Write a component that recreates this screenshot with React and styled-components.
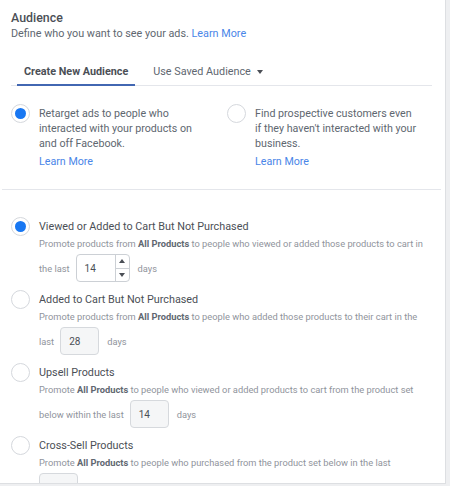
import React from 'react';
import styled, { createGlobalStyle } from 'styled-components';

const GlobalStyle = createGlobalStyle`
  html, body {
    margin: 0;
    padding: 0;
    background: #eeeff1;
  }
  body {
    font-family: Roboto, 'Liberation Sans', Arial, sans-serif;
    -webkit-font-smoothing: antialiased;
  }
`;

const Card = styled.section`
  width: 445px;
  height: 483px;
  background: #fff;
  border-right: 1px solid #dddfe2;
  border-bottom: 1px solid #dddfe2;
  overflow: hidden;
  box-sizing: content-box;
`;

const Header = styled.header`
  padding: 10px 11px 0;
`;

const Title = styled.h2`
  margin: 0;
  font-size: 12.4px;
  line-height: 16px;
  font-weight: 500;
  color: #4b4f56;
`;

const Subtitle = styled.p`
  margin: 0;
  font-size: 10.8px;
  line-height: 16px;
  color: #606770;
`;

const Link = styled.a`
  color: #4a86e8;
  text-decoration: none;
  cursor: pointer;
`;

const Tabs = styled.nav`
  display: flex;
  margin: 16px 13px 0 11px;
  border-bottom: 1px solid #e4e6eb;
`;

const Tab = styled.button`
  display: flex;
  align-items: center;
  gap: 6px;
  border: none;
  background: none;
  padding: 0 7px;
  margin: 0 ${(p) => (p.$active ? '11px' : '0')} -1px ${(p) => (p.$active ? '6px' : '0')};
  height: 28px;
  font-family: inherit;
  font-size: 10.8px;
  font-weight: ${(p) => (p.$active ? 700 : 400)};
  color: ${(p) => (p.$active ? '#4b4f56' : '#606770')};
  border-bottom: 2px solid ${(p) => (p.$active ? '#4267b2' : 'transparent')};
  cursor: pointer;
`;

const Caret = styled.span`
  width: 0;
  height: 0;
  border-left: 3.5px solid transparent;
  border-right: 3.5px solid transparent;
  border-top: 4px solid #4b4f56;
  margin-top: 1px;
`;

const Choices = styled.div`
  display: grid;
  grid-template-columns: 216px 1fr;
  padding: 19px 11px 0;
`;

const Choice = styled.label`
  display: grid;
  grid-template-columns: 28px 1fr;
  align-items: start;
  cursor: pointer;
`;

const Radio = styled.span`
  position: relative;
  width: 19px;
  height: 19px;
  box-sizing: border-box;
  border-radius: 50%;
  border: 1px solid #d5d8dd;
  background: #fff;
  margin-top: ${(p) => p.$offset || 0}px;

  &::after {
    content: '';
    display: ${(p) => (p.$checked ? 'block' : 'none')};
    position: absolute;
    left: 3px;
    top: 3px;
    width: 11px;
    height: 11px;
    border-radius: 50%;
    background: #1877f2;
  }
`;

const ChoiceText = styled.div`
  font-size: 10.7px;
  line-height: 15px;
  color: #606770;
  max-width: 165px;
  padding-top: 1px;
`;

const LearnMore = styled(Link)`
  display: block;
  margin-top: 3px;
`;

const Divider = styled.hr`
  margin: 20px 4px 0 2px;
  border: none;
  border-top: 1px solid #e4e6eb;
`;

const Options = styled.div`
  padding: 29px 11px 0;
  display: flex;
  flex-direction: column;
  gap: 10px;
`;

const Option = styled.div`
  display: grid;
  grid-template-columns: 28px 1fr;
`;

const OptionTitle = styled.div`
  font-size: 10.8px;
  line-height: 16px;
  color: #4b4f56;
`;

const OptionDesc = styled.div`
  font-size: 9.3px;
  line-height: 16px;
  color: #90949c;
  margin-top: 1px;
  white-space: nowrap;

  b {
    color: #606770;
    font-weight: 700;
  }
`;

const InputRow = styled.div`
  display: flex;
  align-items: center;
  gap: 6px;
  margin-top: 2px;
  font-size: 9.3px;
  color: #90949c;
`;

const NumberBox = styled.div`
  display: flex;
  align-items: center;
  width: ${(p) => (p.$spin ? 54 : 39)}px;
  height: 28px;
  box-sizing: border-box;
  border: 1px solid ${(p) => (p.$disabled ? '#d6d9dd' : '#ccd0d5')};
  border-radius: 4px;
  background: ${(p) => (p.$disabled ? '#f5f6f7' : '#fff')};
  font-size: 10px;
  color: #4b4f56;
  padding-left: 8px;
  margin-right: 2px;
  overflow: hidden;
`;

const BoxValue = styled.span`
  flex: 1;
`;

const Spinner = styled.div`
  display: flex;
  flex-direction: column;
  width: 13px;
  height: 100%;
  border-left: 1px solid #ccd0d5;
`;

const SpinBtn = styled.span`
  flex: 1;
  display: flex;
  align-items: center;
  justify-content: center;

  &::before {
    content: '';
    border-left: 3.5px solid transparent;
    border-right: 3.5px solid transparent;
    ${(p) => (p.$down ? 'border-top' : 'border-bottom')}: 4px solid #4b4f56;
  }

  & + & {
    border-top: 1px solid #ccd0d5;
  }
`;

const options = [
  {
    title: 'Viewed or Added to Cart But Not Purchased',
    desc: (
      <>
        Promote products from <b>All Products</b> to people who viewed or added those products to cart in
      </>
    ),
    lead: 'the last',
    value: 14,
    checked: true,
    spin: true,
  },
  {
    title: 'Added to Cart But Not Purchased',
    desc: (
      <>
        Promote products from <b>All Products</b> to people who added those products to their cart in the
      </>
    ),
    lead: 'last',
    value: 28,
  },
  {
    title: 'Upsell Products',
    desc: (
      <>
        Promote <b>All Products</b> to people who viewed or added products to cart from the product set
      </>
    ),
    lead: 'below within the last',
    value: 14,
  },
  {
    title: 'Cross-Sell Products',
    desc: (
      <>
        Promote <b>All Products</b> to people who purchased from the product set below in the last
      </>
    ),
    lead: null,
    value: 14,
  },
];

const App = () => {
  return (
    <React.Fragment>
      <GlobalStyle />
      <Card>
        <Header>
          <Title>Audience</Title>
          <Subtitle>
            Define who you want to see your ads. <Link>Learn More</Link>
          </Subtitle>
        </Header>
        <Tabs>
          <Tab $active>Create New Audience</Tab>
          <Tab>
            Use Saved Audience <Caret />
          </Tab>
        </Tabs>
        <Choices>
          <Choice>
            <Radio $checked $offset={-1} />
            <ChoiceText>
              Retarget ads to people who interacted with your products on and off Facebook.
              <LearnMore>Learn More</LearnMore>
            </ChoiceText>
          </Choice>
          <Choice>
            <Radio $offset={-1} />
            <ChoiceText>
              Find prospective customers even if they haven't interacted with your business.
              <LearnMore>Learn More</LearnMore>
            </ChoiceText>
          </Choice>
        </Choices>
        <Divider />
        <Options>
          {options.map((o) => (
            <Option key={o.title}>
              <Radio $checked={o.checked} $offset={-2} />
              <div>
                <OptionTitle>{o.title}</OptionTitle>
                <OptionDesc>{o.desc}</OptionDesc>
                <InputRow>
                  {o.lead && <span>{o.lead}</span>}
                  <NumberBox $spin={o.spin} $disabled={!o.spin}>
                    <BoxValue>{o.value}</BoxValue>
                    {o.spin && (
                      <Spinner>
                        <SpinBtn />
                        <SpinBtn $down />
                      </Spinner>
                    )}
                  </NumberBox>
                  <span>days</span>
                </InputRow>
              </div>
            </Option>
          ))}
        </Options>
      </Card>
    </React.Fragment>
  );
};

export default App;
